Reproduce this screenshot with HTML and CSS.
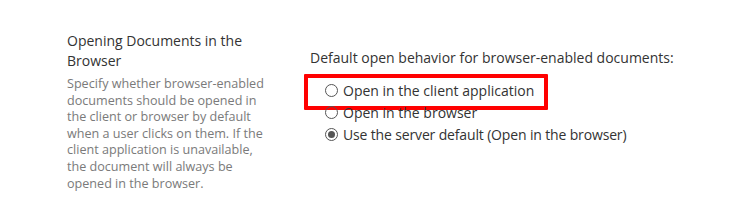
FILE: index.html
```html
<!DOCTYPE html>
<html>
<head>
<meta charset="utf-8">
<link rel="stylesheet" href="styles.css">
</head>
<body>
<div class="section">
  <div class="info">
    <div class="title">Opening Documents in the Browser</div>
    <div class="desc">Specify whether browser-enabled documents should be opened in the client or browser by default when a user clicks on them. If the client application is unavailable, the document will always be opened in the browser.</div>
  </div>
  <div class="settings">
    <div class="label">Default open behavior for browser-enabled documents:</div>
    <div class="options">
      <div class="option highlight"><span class="radio"></span><span>Open in the client application</span></div>
      <div class="option"><span class="radio"></span><span>Open in the browser</span></div>
      <div class="option"><span class="radio checked"></span><span>Use the server default (Open in the browser)</span></div>
    </div>
  </div>
</div>
</body>
</html>
```
FILE: styles.css
```css
html, body {
  margin: 0;
  background: #ffffff;
}
body {
  font-family: "Open Sans", "Noto Sans", sans-serif;
  color: #333333;
}
.section {
  display: flex;
  padding: 31px 0 0 67px;
}
.info {
  width: 198px;
  flex: none;
}
.title {
  font-size: 14px;
  line-height: 20px;
  color: #333333;
}
.desc {
  font-size: 12.6px;
  line-height: 16.6px;
  color: #7a7a7a;
  margin-top: 5px;
}
.settings {
  margin-left: 45px;
  padding-top: 17px;
}
.label {
  font-size: 14px;
  line-height: 20px;
  color: #333333;
}
.options {
  margin-top: 11px;
}
.option {
  display: flex;
  align-items: center;
  gap: 5px;
  height: 22px;
  font-size: 14px;
  padding-left: 15px;
  position: relative;
  width: fit-content;
}
.option:last-child {
  letter-spacing: -0.15px;
}
.highlight::after {
  content: "";
  position: absolute;
  left: -6px;
  right: -14px;
  top: -5px;
  bottom: -9px;
  border: 4px solid #ff0000;
  border-radius: 1px;
}
.radio {
  width: 11px;
  height: 11px;
  border: 1px solid #555555;
  border-radius: 50%;
  box-sizing: content-box;
  flex: none;
  display: inline-flex;
  align-items: center;
  justify-content: center;
}
.radio.checked::before {
  content: "";
  width: 7px;
  height: 7px;
  border-radius: 50%;
  background: #555555;
}
```
